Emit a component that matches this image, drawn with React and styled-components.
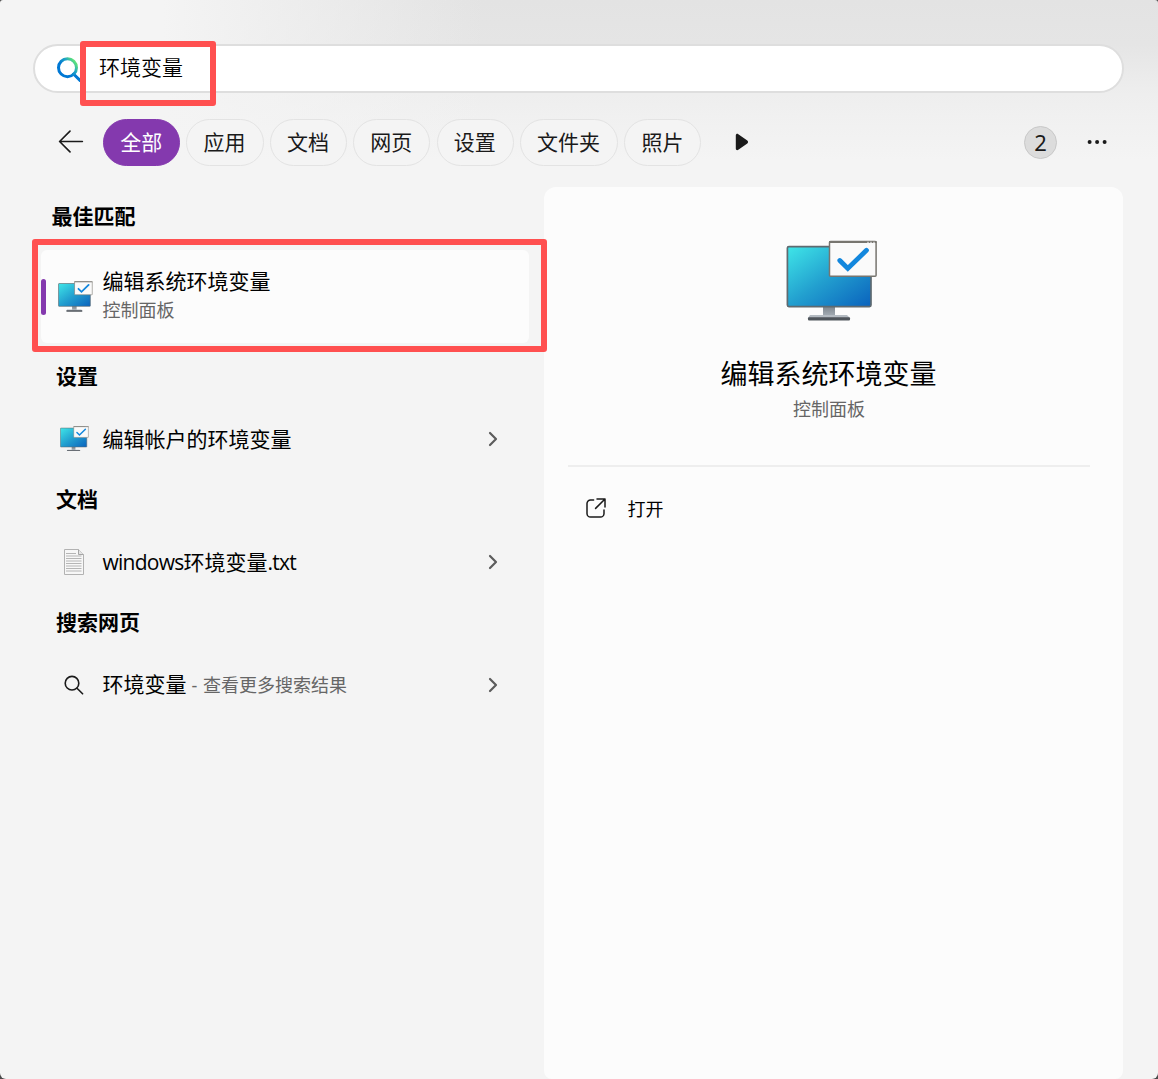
import React, { useState } from "react";
import styled, { createGlobalStyle } from "styled-components";

const GlobalStyle = createGlobalStyle`
  * {
    box-sizing: border-box;
  }

  body {
    margin: 0;
    background: #4a4a4a;
    color: #000000;
    font-family: "Noto Sans", "Noto Sans CJK SC", sans-serif;
  }
`;

const Window = styled.div`
  position: relative;
  display: flex;
  flex-direction: column;
  width: 1158px;
  height: 1079px;
  padding: 44px 34px 0 33px;
  overflow: hidden;
  border-radius: 3px 3px 6px 6px;
  background:
    linear-gradient(90deg, #f4f4f4 14%, rgba(244, 244, 244, 0) 42%) 0 0 / 100% 190px no-repeat,
    linear-gradient(180deg, #e3e3e3 0, #e5e5e5 44px, #eeeeee 94px, #f4f4f4 160px, #f4f4f4 100%);
`;

const SearchBar = styled.div`
  display: flex;
  align-items: center;
  flex: none;
  height: 49px;
  padding-left: 21px;
  border: 2px solid #dedede;
  border-radius: 25px;
  background: #ffffff;
`;

const SearchInput = styled.input`
  flex: 1;
  min-width: 0;
  margin-left: 17px;
  padding: 0 0 5px;
  border: none;
  outline: none;
  background: transparent;
  color: #000000;
  font: 350 21px "Noto Sans", "Noto Sans CJK SC", sans-serif;
`;

const FilterBar = styled.div`
  display: flex;
  align-items: center;
  flex: none;
  height: 47px;
  margin-top: 26px;
  padding: 0 17px 0 25px;
`;

const IconButton = styled.button`
  display: flex;
  align-items: center;
  padding: 0 0 2px;
  border: none;
  background: transparent;
  color: #1a1a1a;
`;

const Chips = styled.div`
  display: flex;
  gap: 6.2px;
  margin: 0 34px 0 19px;
`;

const Chip = styled.button`
  height: 47px;
  padding: 0 17px 1px 16.2px;
  border: 1px solid ${({ $active }) => ($active ? "#8439ae" : "#e3e3e3")};
  border-radius: 24px;
  background: ${({ $active }) => ($active ? "#8439ae" : "#f4f4f4")};
  color: ${({ $active }) => ($active ? "#ffffff" : "#1a1a1a")};
  font: 400 21px/44px "Noto Sans", "Noto Sans CJK SC", sans-serif;
  white-space: nowrap;
`;

const Spacer = styled.div`
  flex: 1;
`;

const Avatar = styled.div`
  width: 33px;
  height: 33px;
  margin: 0 30px 1px 0;
  border: 1px solid #c8c8c8;
  border-radius: 50%;
  background: #dcdcdc;
  color: #1a1a1a;
  font-size: 22px;
  line-height: 30px;
  text-align: center;
`;

const Content = styled.div`
  display: flex;
  flex: 1;
  margin-top: 21px;
`;

const Results = styled.div`
  width: 511px;
  padding: 10px 15px 0 8px;
`;

const GroupTitle = styled.h2`
  height: 40px;
  margin: 0;
  padding-left: ${({ $first }) => ($first ? "10.5px" : "15px")};
  font-size: 21px;
  font-weight: 700;
  line-height: 39px;
`;

const BestMatch = styled.div`
  display: flex;
  align-items: center;
  height: 93px;
  margin: 13px 0 14px;
  border-radius: 6px;
  background: #fcfcfc;
`;

const ActiveMark = styled.div`
  width: 5px;
  height: 36px;
  margin-right: 11.5px;
  border-radius: 3px;
  background: #8439ae;
`;

const BestMatchText = styled.div`
  padding: 0 0 4px 10px;
  font-size: 21px;
  line-height: 30px;
`;

const ResultRow = styled.div`
  display: flex;
  align-items: center;
  height: 83px;
  padding-right: 31px;
`;

const IconCell = styled.div`
  display: flex;
  justify-content: center;
  width: 46px;
  margin: 0 5.5px 0 10px;
  flex: none;
`;

const ResultText = styled.div`
  flex: 1;
  font-size: 21px;
  line-height: 30px;
  white-space: nowrap;
`;

const Latin = styled.span`
  font-family: "Open Sans", "Noto Sans", sans-serif;
  letter-spacing: -0.75px;
`;

const Caption = styled.div`
  color: #666666;
  font-size: 18px;
  line-height: 28px;
`;

const Hint = styled.span`
  margin-left: 5px;
  color: #666666;
  font-size: 18px;
  word-spacing: 1px;
`;

const Preview = styled.div`
  display: flex;
  flex-direction: column;
  align-items: center;
  flex: 1;
  padding: 53px 33px 0 24px;
  margin-right: 1px;
  border-radius: 12px 12px 8px 8px;
  background: #fcfcfc;
`;

const PreviewIcon = styled.div`
  display: flex;
  padding-left: 6px;
`;

const PreviewTitle = styled.h1`
  margin: 32px 1px 1px 0;
  font-size: 27px;
  font-weight: 400;
  line-height: 40px;
`;

const Divider = styled.div`
  width: 100%;
  height: 2px;
  margin: 42px 0 21px;
  background: #eeeeee;
`;

const Action = styled.button`
  display: flex;
  align-items: center;
  align-self: flex-start;
  gap: 21.5px;
  height: 40px;
  padding: 0 0 0 18px;
  border: none;
  background: transparent;
  color: #000000;
  font: 400 18px "Noto Sans", "Noto Sans CJK SC", sans-serif;
`;

// red markers laid over the query and the best match
const Highlight = styled.div`
  position: absolute;
  top: ${({ $top }) => $top}px;
  left: ${({ $left }) => $left}px;
  width: ${({ $width }) => $width}px;
  height: ${({ $height }) => $height}px;
  border: 6px solid #ff5050;
  border-radius: 3px;
  pointer-events: none;
`;

const BingSearchIcon = () => (
  <svg width="26" height="26" viewBox="0 0 26 26" fill="none">
    <defs>
      <linearGradient id="lens" x1="3" y1="18" x2="20" y2="4" gradientUnits="userSpaceOnUse">
        <stop offset="0.35" stopColor="#0078d4" />
        <stop offset="0.65" stopColor="#1fa5c4" />
        <stop offset="0.9" stopColor="#5be07c" />
      </linearGradient>
    </defs>
    <path d="M17.5 18L24 24.4" stroke="#0078d4" strokeWidth="3" strokeLinecap="round" />
    <circle cx="11.5" cy="11.7" r="9" stroke="url(#lens)" strokeWidth="3" />
  </svg>
);

const BackIcon = () => (
  <svg width="26" height="24" viewBox="0 0 26 24" fill="none" stroke="currentColor" strokeWidth="1.6" strokeLinecap="round" strokeLinejoin="round">
    <path d="M24.4 11.5H2M12 1.1L1.6 11.5 12 21.9" />
  </svg>
);

const PlayIcon = () => (
  <svg width="14" height="18" viewBox="0 0 14 18" fill="currentColor">
    <path d="M.8 2.4C.8 1 2.2.4 3.3 1.2l9 6.4c1 .8 1 2 0 2.8l-9 6.4C2.2 17.6.8 17 .8 15.6z" />
  </svg>
);

const MoreIcon = () => (
  <svg width="20" height="6" viewBox="0 0 20 6" fill="currentColor">
    <circle cx="2.6" cy="3" r="2" />
    <circle cx="10.1" cy="3" r="2" />
    <circle cx="17.6" cy="3" r="2" />
  </svg>
);

const MonitorIcon = ({ id, width }) => (
  <svg width={width} height={(width * 82) / 92} viewBox="0 0 92 82">
    <defs>
      <linearGradient id={`${id}-screen`} x1="0" y1="0" x2="1" y2="1">
        <stop offset="0" stopColor="#3fe6e8" />
        <stop offset="0.5" stopColor="#229fcf" />
        <stop offset="1" stopColor="#0a62bd" />
      </linearGradient>
      <linearGradient id={`${id}-stand`} x1="0" y1="0" x2="0" y2="1">
        <stop offset="0" stopColor="#7b848c" />
        <stop offset="1" stopColor="#a9b1b9" />
      </linearGradient>
    </defs>
    <path d="M37 66h12v11H37z" fill={`url(#${id}-stand)`} />
    <path d="M24 75h37l3 3v1H22v-1z" fill="#b4bbc2" />
    <rect x="22" y="77.2" width="42" height="3.4" rx="1" fill="#50565c" />
    <rect x="1.4" y="6.6" width="83.6" height="60" rx="1.5" fill={`url(#${id}-screen)`} stroke="#5f6a70" strokeWidth="1.7" />
    <rect x="43.5" y="1.6" width="46.6" height="34.6" rx="1" fill="#fafafa" stroke="#77756f" strokeWidth="1.5" />
    <path d="M43 2h47.6" stroke="#77756f" strokeWidth="2.2" />
    <path d="M81 2.3h8" stroke="#d0d0d0" strokeWidth="1" strokeDasharray="2 1" />
    <path d="M53.8 20.5l8 8L80.5 10.3" fill="none" stroke="#1387dd" strokeWidth="4.8" strokeLinecap="round" />
  </svg>
);

const TextFileIcon = () => (
  <svg width="22" height="28" viewBox="0 0 22 28">
    <path d="M1.5 1.5h14L20.5 6.5v20h-19z" fill="#f7f7f7" stroke="#b2b2b2" />
    <path d="M15.5 1.5v5h5" fill="#e4e4e4" stroke="#a5a5a5" />
    <path d="M3 5.5h10M3 8h15.5M3 10.5h15.5M3 13h15.5M3 15.5h15.5M3 18h15.5M3 20.5h15.5M3 23h15.5" stroke="#b5b5b5" />
  </svg>
);

const SearchIcon = () => (
  <svg width="20" height="20" viewBox="0 0 20 20" fill="none" stroke="#1a1a1a" strokeWidth="1.6" strokeLinecap="round">
    <circle cx="8" cy="8.2" r="6.8" />
    <path d="M13 13.2l5.6 5.6" />
  </svg>
);

const ChevronIcon = () => (
  <svg width="10" height="16" viewBox="0 0 10 16" fill="none" stroke="#5c5c5c" strokeWidth="2.2" strokeLinecap="round" strokeLinejoin="round">
    <path d="M2 2l6 6-6 6" />
  </svg>
);

const OpenIcon = () => (
  <svg width="20" height="20" viewBox="0 0 20 20" fill="none" stroke="#1a1a1a" strokeWidth="1.5" strokeLinecap="round" strokeLinejoin="round">
    <path d="M7.6 2H4.6A3.6 3.6 0 0 0 1 5.6v9.8A3.6 3.6 0 0 0 4.6 19h9.8a3.6 3.6 0 0 0 3.6-3.6V12" />
    <path d="M11 1h8v8M19 1L9.6 10.4" />
  </svg>
);

const filters = ["全部", "应用", "文档", "网页", "设置", "文件夹", "照片"];

const groups = [
  { title: "设置", text: "编辑帐户的环境变量", icon: <MonitorIcon id="account" width={29} /> },
  {
    title: "文档",
    text: (
      <>
        <Latin>windows</Latin>环境变量<Latin>.txt</Latin>
      </>
    ),
    icon: <TextFileIcon />,
  },
  { title: "搜索网页", text: "环境变量", hint: "- 查看更多搜索结果", icon: <SearchIcon /> },
];

const App = () => {
  const [query, setQuery] = useState("环境变量");
  const [active, setActive] = useState("全部");

  return (
    <>
      <GlobalStyle />
      <Window lang="zh-CN">
        <SearchBar>
          <BingSearchIcon />
          <SearchInput value={query} onChange={(e) => setQuery(e.target.value)} />
        </SearchBar>

        <FilterBar>
          <IconButton>
            <BackIcon />
          </IconButton>
          <Chips>
            {filters.map((filter) => (
              <Chip key={filter} $active={filter === active} onClick={() => setActive(filter)}>
                {filter}
              </Chip>
            ))}
          </Chips>
          <IconButton>
            <PlayIcon />
          </IconButton>
          <Spacer />
          <Avatar>2</Avatar>
          <IconButton>
            <MoreIcon />
          </IconButton>
        </FilterBar>

        <Content>
          <Results>
            <GroupTitle $first>最佳匹配</GroupTitle>
            <BestMatch>
              <ActiveMark />
              <MonitorIcon id="best" width={35} />
              <BestMatchText>
                编辑系统环境变量
                <Caption>控制面板</Caption>
              </BestMatchText>
            </BestMatch>

            {groups.map(({ title, text, hint, icon }) => (
              <React.Fragment key={title}>
                <GroupTitle>{title}</GroupTitle>
                <ResultRow>
                  <IconCell>{icon}</IconCell>
                  <ResultText>
                    {text}
                    {hint && <Hint>{hint}</Hint>}
                  </ResultText>
                  <ChevronIcon />
                </ResultRow>
              </React.Fragment>
            ))}
          </Results>

          <Preview>
            <PreviewIcon>
              <MonitorIcon id="preview" width={92} />
            </PreviewIcon>
            <PreviewTitle>编辑系统环境变量</PreviewTitle>
            <Caption>控制面板</Caption>
            <Divider />
            <Action>
              <OpenIcon />
              打开
            </Action>
          </Preview>
        </Content>

        <Highlight $top={41} $left={80} $width={136} $height={65} />
        <Highlight $top={239} $left={32} $width={515} $height={113} />
      </Window>
    </>
  );
};

export default App;
